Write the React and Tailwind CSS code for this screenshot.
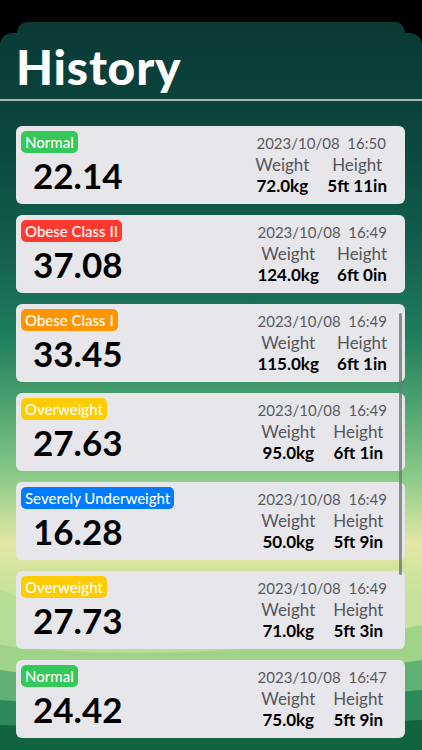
import React from 'react';

const records = [
    { label: 'Normal', color: 'bg-[#34c759]', bmi: '22.14', date: '2023/10/08  16:50', weight: '72.0kg', height: '5ft 11in' },
    { label: 'Obese Class II', color: 'bg-[#ff3b30]', bmi: '37.08', date: '2023/10/08  16:49', weight: '124.0kg', height: '6ft 0in' },
    { label: 'Obese Class I', color: 'bg-[#ff9500]', bmi: '33.45', date: '2023/10/08  16:49', weight: '115.0kg', height: '6ft 1in' },
    { label: 'Overweight', color: 'bg-[#ffcc00]', bmi: '27.63', date: '2023/10/08  16:49', weight: '95.0kg', height: '6ft 1in' },
    { label: 'Severely Underweight', color: 'bg-[#007aff]', bmi: '16.28', date: '2023/10/08  16:49', weight: '50.0kg', height: '5ft 9in' },
    { label: 'Overweight', color: 'bg-[#ffcc00]', bmi: '27.73', date: '2023/10/08  16:49', weight: '71.0kg', height: '5ft 3in' },
    { label: 'Normal', color: 'bg-[#34c759]', bmi: '24.42', date: '2023/10/08  16:47', weight: '75.0kg', height: '5ft 9in' },
];

function HistoryCard({ record }) {
    return (
        <div className="flex h-[78px] justify-between rounded-[6px] bg-[#e6e6eb] pl-[5px] pr-[18px] pt-[5px]">
            <div className="flex flex-col items-start">
                <span className={`${record.color} rounded-[5px] px-[4px] text-[15px] leading-[22px] font-medium text-white`}>
                    {record.label}
                </span>
                <span className="ml-[12px] mt-[1px] text-[35px] leading-[42px] font-bold text-black">
                    {record.bmi}
                </span>
            </div>
            <div className="flex flex-col items-center pt-[3px]">
                <span className="whitespace-pre text-[15px] leading-[18px] text-[#5a5a5e]">{record.date}</span>
                <div className="mt-[2px] flex gap-[18px]">
                    <div className="flex flex-col items-center">
                        <span className="text-[17px] leading-[22px] text-[#555559]">Weight</span>
                        <span className="text-[17px] leading-[20px] font-bold text-black">{record.weight}</span>
                    </div>
                    <div className="flex flex-col items-center">
                        <span className="text-[17px] leading-[22px] text-[#555559]">Height</span>
                        <span className="text-[17px] leading-[20px] font-bold text-black">{record.height}</span>
                    </div>
                </div>
            </div>
        </div>
    );
}

export default function App() {
    return (
        <div className="h-[750px] w-[422px] overflow-hidden bg-black pt-[22px] font-['Lato','Noto_Sans',sans-serif]">
            <div className="mx-[17px] h-[11px] rounded-t-[10px] bg-[#0b3a35]"></div>
            <div className="relative h-[717px] overflow-hidden rounded-t-[12px] bg-[linear-gradient(180deg,#0a3b36_0%,#0c4840_16%,#135f4f_30%,#1f7c5c_42%,#4ea36f_52%,#8ccb8a_62%,#e3e7a4_71%,#c6e29c_78%)]">
                {/* hills */}
                <svg className="absolute bottom-0 left-0" width="422" height="200" viewBox="0 0 422 200" preserveAspectRatio="none">
                    <path d="M0 40 C 80 70, 200 95, 422 80 L422 200 L0 200 Z" fill="#b6dd98" />
                    <path d="M0 95 C 120 110, 260 105, 422 75 L422 200 L0 200 Z" fill="#9fd38a" />
                    <path d="M0 120 C 140 140, 280 130, 422 110 L422 200 L0 200 Z" fill="#5fb072" />
                    <path d="M0 150 C 120 160, 300 150, 422 140 L422 200 L0 200 Z" fill="#2c8a58" />
                    <path d="M0 175 C 150 182, 300 175, 422 170 L422 200 L0 200 Z" fill="#10643f" />
                </svg>

                <div className="relative">
                    <h1 className="px-[16px] pt-[5px] text-[48px] leading-[58px] font-black tracking-[0.8px] text-white">History</h1>
                    <div className="mt-[3px] h-[1.5px] bg-[#aab8b2]"></div>

                    <div className="flex flex-col gap-[11px] px-[16px] pt-[25px] pr-[17px]">
                        {records.map((record, index) => (
                            <HistoryCard key={index} record={record} />
                        ))}
                    </div>
                </div>

                {/* scroll indicator */}
                <div className="absolute left-[399px] top-[280px] h-[262px] w-[3px] rounded-full bg-[#6f7a74]/80"></div>
            </div>
        </div>
    );
}
